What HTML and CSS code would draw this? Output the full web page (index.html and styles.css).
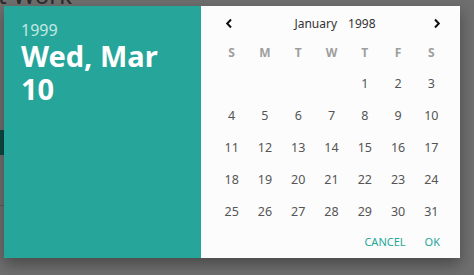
FILE: index.html
```html
<!DOCTYPE html>
<html lang="en">
<head>
    <meta charset="UTF-8">
    <meta name="viewport" content="width=device-width, initial-scale=1.0">
    <title>Date Picker</title>
    <link rel="stylesheet" href="styles.css">
</head>
<body>
    <div class="page">
        <div class="page-title">t Work</div>
        <div class="page-bar"></div>
        <div class="page-line"></div>
    </div>

    <div class="dialog">
        <div class="dialog-header">
            <div class="year">1999</div>
            <div class="date">Wed, Mar<br>10</div>
        </div>
        <div class="calendar">
            <div class="nav">
                <span class="arrow">
                    <svg width="8" height="11" viewBox="0 0 8 11"><path d="M6 1.5 L2.2 5.5 L6 9.5" fill="none" stroke="#111" stroke-width="2"/></svg>
                </span>
                <span class="month">January<span class="nav-year">1998</span></span>
                <span class="arrow">
                    <svg width="8" height="11" viewBox="0 0 8 11"><path d="M2 1.5 L5.8 5.5 L2 9.5" fill="none" stroke="#111" stroke-width="2"/></svg>
                </span>
            </div>
            <div class="weekdays">
                <span>S</span><span>M</span><span>T</span><span>W</span><span>T</span><span>F</span><span>S</span>
            </div>
            <div class="days">
                <span></span><span></span><span></span><span></span><span>1</span><span>2</span><span>3</span>
                <span>4</span><span>5</span><span>6</span><span>7</span><span>8</span><span>9</span><span>10</span>
                <span>11</span><span>12</span><span>13</span><span>14</span><span>15</span><span>16</span><span>17</span>
                <span>18</span><span>19</span><span>20</span><span>21</span><span>22</span><span>23</span><span>24</span>
                <span>25</span><span>26</span><span>27</span><span>28</span><span>29</span><span>30</span><span>31</span>
            </div>
            <div class="actions">
                <button class="btn">Cancel</button>
                <button class="btn">OK</button>
            </div>
        </div>
    </div>
</body>
</html>
```

FILE: styles.css
```css
body {
    margin: 0;
    width: 474px;
    height: 275px;
    overflow: hidden;
    background-color: #6f6f6f;
    font-family: "Noto Sans", "Open Sans", sans-serif;
    position: relative;
}
.page {
    height: 275px;
}
.page-title {
    font-size: 24px;
    line-height: 24px;
    color: #2a2a2a;
    margin-top: -17px;
    margin-left: -2px;
}
.page-bar {
    margin-top: 123px;
    width: 40px;
    height: 25px;
    background-color: #0d4a44;
}
.page-line {
    margin-top: 50px;
    width: 60px;
    height: 1px;
    background-color: #5a5a5a;
}
.dialog {
    position: absolute;
    left: 4px;
    top: 6px;
    width: 456px;
    height: 252px;
    display: flex;
    box-shadow: 0 6px 14px rgba(0,0,0,0.35);
}
.dialog-header {
    width: 197px;
    background-color: #26a69a;
    padding: 14px 17px;
    box-sizing: border-box;
    color: white;
}
.year {
    font-size: 16px;
    line-height: 20px;
    color: #c4e8e4;
}
.date {
    font-size: 29px;
    font-weight: bold;
    line-height: 33px;
    margin-top: -1px;
}
.calendar {
    flex: 1;
    background-color: #fcfcfc;
    padding: 2px 12px 0 14px;
}
.nav {
    height: 30px;
    display: flex;
    align-items: center;
    justify-content: space-between;
    padding: 0 7px 0 10px;
}
.arrow {
    display: flex;
}
.month {
    font-size: 12px;
    color: #333;
    margin-left: 4px;
}
.nav-year {
    margin-left: 11px;
}
.weekdays, .days {
    display: grid;
    grid-template-columns: repeat(7, 1fr);
    text-align: center;
}
.weekdays span {
    height: 30px;
    line-height: 30px;
    font-size: 12px;
    font-weight: bold;
    color: #9e9e9e;
}
.days span {
    height: 32px;
    line-height: 32px;
    font-size: 12.5px;
    color: #555;
}
.actions {
    height: 26px;
    display: flex;
    justify-content: flex-end;
    align-items: center;
    gap: 3px;
}
.btn {
    background: none;
    border: none;
    font-family: inherit;
    font-size: 11px;
    text-transform: uppercase;
    color: #26a69a;
    padding: 4px 8px;
    cursor: pointer;
}
```
